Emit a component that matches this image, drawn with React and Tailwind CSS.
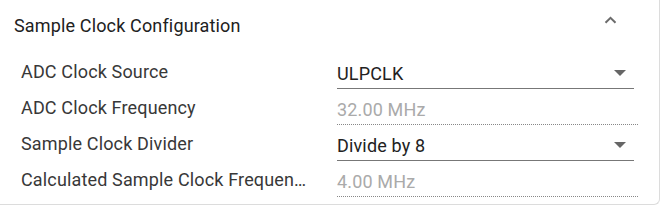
const rows = [
  { label: 'ADC Clock Source', value: 'ULPCLK', select: true },
  { label: 'ADC Clock Frequency', value: '32.00 MHz' },
  { label: 'Sample Clock Divider', value: 'Divide by 8', select: true },
  { label: 'Calculated Sample Clock Frequency', value: '4.00 MHz' },
];

export default function App() {
  return (
    <div className="w-[665px] h-[207px] bg-white overflow-hidden font-['Roboto',sans-serif] tracking-[0.15px]">
      <div className="w-[660px] h-[205px] border-r border-b border-[#dcdcdc] rounded-br-[6px]">
        {/* header */}
        <div className="flex items-center h-[50px] pl-[14px] pr-[42px]">
          <h3 className="flex-1 text-[18px] text-[#212121]">Sample Clock Configuration</h3>
          <svg width="13" height="8" viewBox="0 0 13 8" className="text-[#6b6b6b] mb-[10px]">
            <path d="M1.5 6.8 L6.5 1.8 L11.5 6.8" fill="none" stroke="currentColor" strokeWidth="2" />
          </svg>
        </div>

        {/* rows */}
        <div className="flex flex-col pl-[21px] pt-[4px]">
          {rows.map((r) => (
            <div key={r.label} className="flex items-end h-[36px]">
              <div className="w-[289px] truncate text-[18px] text-[#383838] pb-[5px]">{r.label}</div>
              <div
                className={
                  r.select
                    ? 'ml-[27px] w-[297px] flex items-center border-b border-[#777] h-[31px] mb-[1px]'
                    : 'ml-[27px] w-[301px] flex items-center border-b border-dotted border-[#888] h-[31px] mb-[1px]'
                }
              >
                <span className={r.select ? 'flex-1 text-[18px] text-[#222]' : 'flex-1 text-[18px] text-[#aaa]'}>
                  {r.value}
                </span>
                {r.select && (
                  <svg width="12" height="6" viewBox="0 0 12 6" className="mr-[8px] text-[#666]">
                    <path d="M0 0 L12 0 L6 6 Z" fill="currentColor" />
                  </svg>
                )}
              </div>
            </div>
          ))}
        </div>
      </div>
    </div>
  );
}
